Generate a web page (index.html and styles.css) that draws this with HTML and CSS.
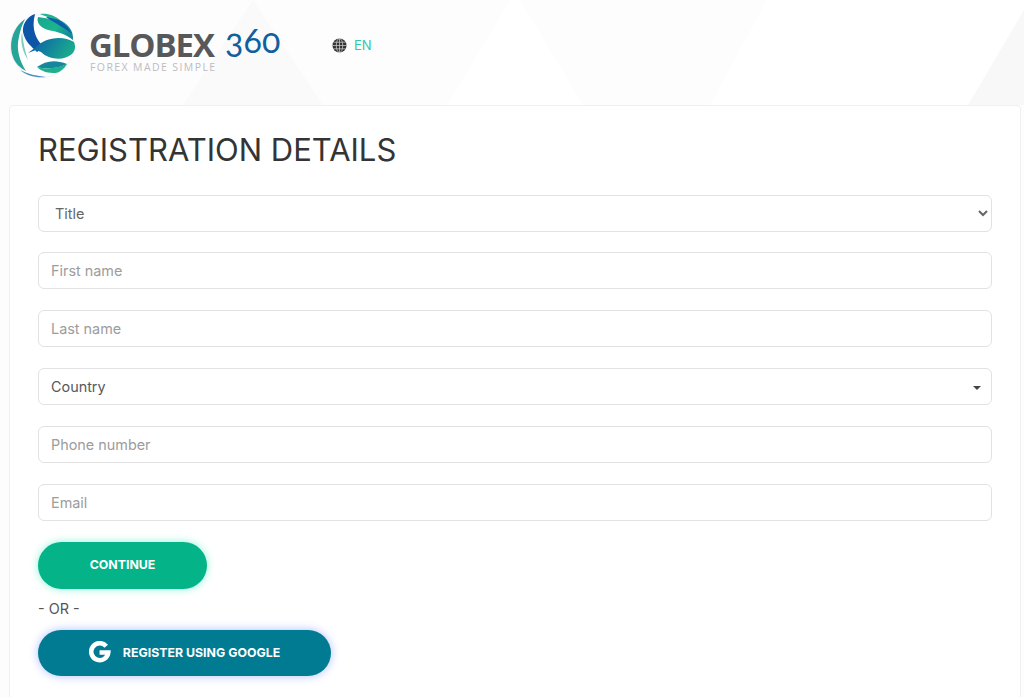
FILE: index.html
```html
<!DOCTYPE html>
<html lang="en">
<head>
<meta charset="utf-8">
<title>Registration details</title>
<link rel="stylesheet" href="styles.css">
</head>
<body>
<svg class="backdrop" viewBox="0 0 1024 697" aria-hidden="true">
  <polygon points="253,0 183,105 323,105" fill="#fafafa"/>
  <polygon points="447,105 515,-8 583,105" fill="#fff"/>
  <polygon points="767,0 1024,0 1024,105 710,105" fill="#fff"/>
  <polygon points="968,105 1024,10 1024,105" fill="#f8f8f8"/>
</svg>
<header class="topbar">
  <a class="brand" href="#">
    <svg class="globe" viewBox="9 12 66 66" aria-hidden="true">
      <defs>
        <linearGradient id="band" x1="0" y1="0" x2="1" y2="0.3">
          <stop offset="0" stop-color="#0d55a6"/>
          <stop offset=".5" stop-color="#11809e"/>
          <stop offset="1" stop-color="#19a98c"/>
        </linearGradient>
        <linearGradient id="top" x1="0" y1="0" x2="1" y2="0.6">
          <stop offset="0" stop-color="#16a892"/>
          <stop offset=".6" stop-color="#1bb58e"/>
          <stop offset="1" stop-color="#148a9a"/>
        </linearGradient>
      </defs>
      <circle cx="42" cy="46" r="31.500" fill="#fff" stroke="#efefef"/>
      <path d="M25 19C13 27 8 44 13 57c2 6 7 11 13 14-7-11-10-23-7-34 1-6 3-12 6-18Z" fill="#27a498"/>
      <path d="M20 70c7 6 16 8 26 7-9-1-18-3-26-7Z" fill="#4a8fc4"/>
      <path d="M22 32c-2 9 0 19 6 28-3-9-5-18-6-28Z" fill="#7fcdc2"/>
      <path d="M35 14c-7 2-13 10-12 18 2 10 9 15 14 20l7-5C36 40 31 29 35 14Z" fill="#0d55a6"/>
      <path d="M28 53l8-6c7-8 25-13 38-5 2 5 1 9-2 12-8 7-23 6-31-2l-5-2-8 3Z" fill="url(#band)"/>
      <path d="M38 17c-2 6 3 11 10 13 10 2 18 4 25 10 1-10-6-17-15-21-7 0-14-1-20-2Z" fill="url(#top)"/>
      <path d="M46 17c10-1 21 6 26 17-7-6-16-10-26-17Z" fill="#0f5fa8"/>
      <path d="M40 14c8-1 15 2 20 6-6-1-14-3-20-6Z" fill="#22b394"/>
      <path d="M37 67c8-6 18-8 30-3-7 4-20 6-30 3Z" fill="#15879c"/>
      <path d="M37 67c9 3 21 1 30-3-3 5-7 8-11 9-8 0-14-1-19-6Z" fill="#1eb08f"/>
    </svg>
    <span class="wordmark">
      <span class="name-row"><span class="name">GLOBEX</span><span class="num">360</span></span>
      <span class="tagline">FOREX MADE SIMPLE</span>
    </span>
  </a>
  <a class="lang" href="#">
    <svg class="lang-icon" viewBox="0 0 16 16" aria-hidden="true">
      <circle cx="8" cy="8" r="7.500" fill="#333"/>
      <g fill="none" stroke="#ddd" stroke-width=".7">
        <ellipse cx="8" cy="8" rx="3.400" ry="7.500"/>
        <path d="M8 .5v15M.5 8h15M1.600 4.500h12.800M1.600 11.500h12.800"/>
      </g>
    </svg>
    <span>EN</span>
  </a>
</header>
<main class="card">
  <h1 class="heading">REGISTRATION DETAILS</h1>
  <form class="form">
    <select class="control select-native">
      <option>Title</option>
    </select>
    <input class="control" type="text" placeholder="First name">
    <input class="control" type="text" placeholder="Last name">
    <div class="control select-custom"><span>Country</span><i class="caret"></i></div>
    <input class="control" type="text" placeholder="Phone number">
    <input class="control" type="email" placeholder="Email">
    <button class="btn btn-continue" type="button">CONTINUE</button>
    <p class="or">- OR -</p>
    <button class="btn btn-google" type="button">
      <svg class="g-icon" viewBox="0 0 24 24" aria-hidden="true">
        <path fill="none" stroke="#fff" stroke-width="5" d="M18.800 5.600A9.300 9.300 0 1 0 21 12.600H11.500"/>
      </svg>
      <span>REGISTER USING GOOGLE</span>
    </button>
  </form>
</main>
</body>
</html>
```
FILE: styles.css
```css
* { box-sizing: border-box; }
html, body { height: 100%; }
body {
  margin: 0;
  background: #fdfdfd;
  font-family: Inter, "Liberation Sans", sans-serif;
  color: #343434;
  overflow: hidden;
  position: relative;
}
.backdrop {
  position: absolute;
  inset: 0;
  width: 100%;
  height: 100%;
  z-index: 0;
}
.topbar {
  position: relative;
  z-index: 1;
  display: flex;
  align-items: center;
  height: 105px;
  padding: 0 0 15px 9px;
}
.brand {
  display: flex;
  align-items: flex-start;
  text-decoration: none;
  width: 323px;
  height: 90px;
  padding-top: 12px;
}
.globe { width: 66px; height: 66px; flex: none; }
.wordmark {
  display: flex;
  flex-direction: column;
  margin-left: 14px;
  padding-top: 15px;
}
.name-row { display: flex; align-items: flex-start; height: 32px; }
.name {
  font-family: "Open Sans", sans-serif;
  font-weight: 700;
  font-size: 33px;
  line-height: 32px;
  color: #58585a;
  letter-spacing: -1.100px;
  margin-top: 2px;
}
.num {
  font-family: Lato, sans-serif;
  font-weight: 400;
  font-variant-numeric: oldstyle-nums;
  font-size: 34px;
  line-height: 30px;
  color: #10609f;
  margin: -2px 0 0 11px;
  letter-spacing: .2px;
}
.tagline {
  font-family: "Open Sans", sans-serif;
  font-size: 10.500px;
  line-height: 12px;
  letter-spacing: 1.400px;
  color: #bcbcbe;
  margin: 2px 0 0 1px;
}
.lang {
  display: flex;
  align-items: center;
  gap: 7px;
  text-decoration: none;
  color: #2fc9ab;
  font-size: 13px;
}
.lang-icon { width: 15px; height: 15px; }
.card {
  position: relative;
  z-index: 1;
  margin: 0 3px 0 9px;
  height: 620px;
  background: #fff;
  border: 1px solid #f0f0f0;
  border-radius: 4px;
  padding: 23px 28px 0;
}
.heading {
  margin: 0;
  font-size: 31px;
  font-weight: 400;
  line-height: 41px;
  color: #343434;
}
.form {
  display: flex;
  flex-direction: column;
  align-items: flex-start;
  margin-top: 25px;
}
.control {
  display: block;
  width: 100%;
  height: 37px;
  margin: 0 0 21px;
  padding: 0 12px;
  background: #fff;
  border: 1px solid #e2e2e2;
  border-radius: 6px;
  font-family: inherit;
  font-size: 14.400px;
  color: #55595c;
}
.control::placeholder { color: #9c9c9c; opacity: 1; }
.select-native { padding-left: 12px; color: #666; margin-bottom: 20px; }
.select-custom {
  display: flex;
  align-items: center;
  justify-content: space-between;
  padding-right: 10px;
}
.caret {
  width: 0;
  height: 0;
  border-left: 4px solid transparent;
  border-right: 4px solid transparent;
  border-top: 4px solid #444;
  margin-top: 3px;
}
.btn {
  display: flex;
  align-items: center;
  justify-content: center;
  border: 0;
  border-radius: 24px;
  color: #fff;
  font-family: inherit;
  font-size: 12.350px;
  font-weight: 700;
  padding: 0 0 2px;
}
.btn-continue {
  width: 169px;
  height: 47px;
  background: #04b388;
  box-shadow: 0 0 8px #8ff3d6;
}
.or {
  margin: 11px 0 12px;
  font-size: 14.400px;
  line-height: 18px;
  color: #555;
}
.btn-google {
  width: 293px;
  height: 46px;
  gap: 12px;
  background: #007b92;
  box-shadow: 0 0 10px #b0bfff;
}
.g-icon { width: 22px; height: 22px; }
```
